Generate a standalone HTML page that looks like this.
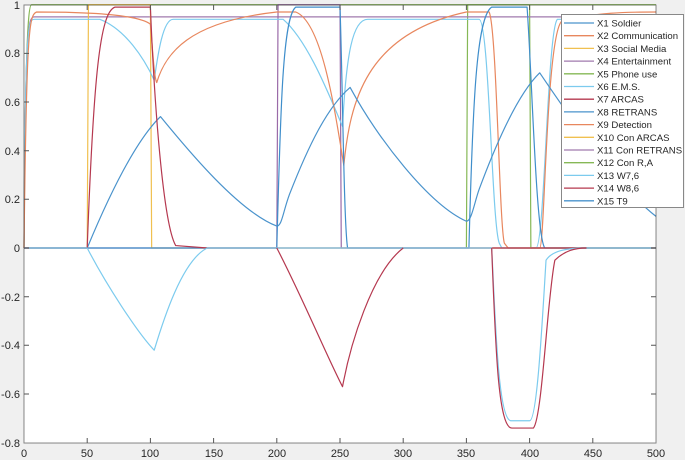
<!DOCTYPE html>
<html><head><meta charset="utf-8"><style>
html,body{margin:0;padding:0;background:#f0f0f0;}
body{width:685px;height:460px;overflow:hidden;font-family:"Liberation Sans",sans-serif;}
</style></head><body>
<svg width="685" height="460" xmlns="http://www.w3.org/2000/svg" style="position:absolute;left:0;top:0">
<rect x="24" y="5" width="632" height="438" fill="#fff"/>
<g transform="translate(24,248) scale(1.264,-243.3)" fill="none" stroke-width="1.2" stroke-linejoin="round">
<path vector-effect="non-scaling-stroke" stroke="#86b856" d="M0,0 C1,0.8 3,1 6,1 L500,1"/>
<path vector-effect="non-scaling-stroke" stroke="#86b856" d="M350,0 L351,1 L400,1 L401,0 L500,0"/>
<path vector-effect="non-scaling-stroke" stroke="#a07aae" d="M0,0 C1,0.9 3,0.95 8,0.95 L500,0.95"/>
<path vector-effect="non-scaling-stroke" stroke="#9a6aa8" d="M0,0 L200,0 L201,1 L250,1 L251,0 L500,0"/>
<path vector-effect="non-scaling-stroke" stroke="#f0c050" d="M0,0 L50,0 L51,1 L100,1 L101,0 L500,0"/>
<path vector-effect="non-scaling-stroke" stroke="#7ccbee" d="M0,0 C1,0.9 3,0.94 8,0.94 L60,0.94 C80,0.9 95,0.78 103,0.69 C106,0.8 110,0.94 118,0.94 L205,0.94 C225,0.85 242,0.62 252,0.5 C255,0.8 260,0.94 272,0.94 L360,0.94 C368,0.94 370,0.1 376,0.02 L378,0 L405,0 C412,0 414,0.9 422,0.94 L500,0.94"/>
<path vector-effect="non-scaling-stroke" stroke="#e8875e" d="M0,0 C2,0.9 4,0.96 10,0.97 C50,0.97 90,0.96 100,0.92 C102,0.8 103,0.7 105,0.68 C112,0.8 130,0.93 200,0.97 L215,0.97 C235,0.93 245,0.6 253,0.34 C258,0.6 270,0.88 350,0.97 L368,0.97 C374,0.9 376,0.1 380,0.02 L383,0 L408,0 C412,0 413,0.85 425,0.93 C450,0.97 480,0.97 500,0.97"/>
<path vector-effect="non-scaling-stroke" stroke="#4a93cc" d="M0,0 L50,0 C70,0.25 90,0.45 108,0.54 C130,0.4 170,0.15 200,0.09 C204,0.09 205,0.15 210,0.22 C225,0.42 240,0.58 258,0.66 C280,0.45 320,0.18 350,0.11 C354,0.11 356,0.18 360,0.24 C375,0.45 392,0.64 408,0.72 C430,0.55 470,0.25 500,0.13"/>
<path vector-effect="non-scaling-stroke" stroke="#3f8ecb" d="M0,0 L200,0 C203,0.6 205,0.95 215,0.99 L250,0.99 C252,0.7 253,0.1 256,0 L352,0 C355,0.6 358,0.95 370,0.99 L398,0.99 C402,0.7 405,0.05 412,0 L500,0"/>
<path vector-effect="non-scaling-stroke" stroke="#b5384f" d="M0,0 L50,0 C55,0.7 60,0.97 72,0.99 L100,0.99 C103,0.6 110,0.1 120,0.01 L145,0 L500,0"/>
<path vector-effect="non-scaling-stroke" stroke="#7ccbee" d="M0,0 L50,0 C65,-0.15 90,-0.35 103,-0.42 C110,-0.3 125,-0.05 145,0 L370,0 C373,-0.3 375,-0.7 385,-0.71 L400,-0.71 C406,-0.71 410,-0.3 413,-0.05 C418,-0.01 430,0 445,0 L500,0"/>
<path vector-effect="non-scaling-stroke" stroke="#b5384f" d="M200,0 C220,-0.2 240,-0.45 252,-0.57 C258,-0.4 275,-0.1 300,0 M370,0 C373,-0.4 375,-0.74 386,-0.74 L403,-0.74 C410,-0.7 414,-0.2 420,-0.05 C428,-0.01 436,0 445,0"/>
</g>
<rect x="24" y="5" width="632" height="438" fill="none" stroke="#262626" stroke-width="1" opacity="0.55"/>
<g stroke="#555" stroke-width="1">
<path d="M87.2,443v-5M150.4,443v-5M213.6,443v-5M276.8,443v-5M340,443v-5M403.2,443v-5M466.4,443v-5M529.6,443v-5M592.8,443v-5"/>
<path d="M87.2,5v5M150.4,5v5M213.6,5v5M276.8,5v5M340,5v5M403.2,5v5M466.4,5v5M529.6,5v5M592.8,5v5"/>
<path d="M24,53.4h5M24,102h5M24,150.7h5M24,199.3h5M24,248h5M24,296.7h5M24,345.3h5M24,394h5"/>
<path d="M656,53.4h-5M656,102h-5M656,150.7h-5M656,199.3h-5M656,248h-5M656,296.7h-5M656,345.3h-5M656,394h-5"/>
</g>
<g font-size="11" fill="#262626" text-anchor="end">
<text x="20" y="9">1</text><text x="20" y="57">0.8</text><text x="20" y="106">0.6</text><text x="20" y="155">0.4</text><text x="20" y="203">0.2</text><text x="20" y="252">0</text><text x="20" y="301">-0.2</text><text x="20" y="349">-0.4</text><text x="20" y="398">-0.6</text><text x="20" y="447">-0.8</text>
</g>
<g font-size="11" fill="#262626" text-anchor="middle">
<text x="24" y="457">0</text><text x="87" y="457">50</text><text x="150" y="457">100</text><text x="214" y="457">150</text><text x="277" y="457">200</text><text x="340" y="457">250</text><text x="403" y="457">300</text><text x="466" y="457">350</text><text x="530" y="457">400</text><text x="593" y="457">450</text><text x="656" y="457">500</text>
</g>
<rect x="561.5" y="14.5" width="122" height="193" fill="#fff" stroke="#888"/>
<g stroke-width="1.3">
<path d="M564,23h30" stroke="#4a93cc"/><path d="M564,35.7h30" stroke="#e8875e"/><path d="M564,48.4h30" stroke="#f0c050"/><path d="M564,61.1h30" stroke="#a07aae"/><path d="M564,73.8h30" stroke="#86b856"/><path d="M564,86.5h30" stroke="#7ccbee"/><path d="M564,99.2h30" stroke="#b5384f"/><path d="M564,111.9h30" stroke="#4a93cc"/><path d="M564,124.6h30" stroke="#e8875e"/><path d="M564,137.3h30" stroke="#f0c050"/><path d="M564,150h30" stroke="#a07aae"/><path d="M564,162.7h30" stroke="#86b856"/><path d="M564,175.4h30" stroke="#7ccbee"/><path d="M564,188.1h30" stroke="#b5384f"/><path d="M564,200.8h30" stroke="#4a93cc"/>
</g>
<g font-size="9.6" fill="#262626">
<text x="597" y="26.5">X1 Soldier</text><text x="597" y="39.2">X2 Communication</text><text x="597" y="51.9">X3 Social Media</text><text x="597" y="64.6">X4 Entertainment</text><text x="597" y="77.3">X5 Phone use</text><text x="597" y="90">X6 E.M.S.</text><text x="597" y="102.7">X7 ARCAS</text><text x="597" y="115.4">X8 RETRANS</text><text x="597" y="128.1">X9 Detection</text><text x="597" y="140.8">X10 Con ARCAS</text><text x="597" y="153.5">X11 Con RETRANS</text><text x="597" y="166.2">X12 Con R,A</text><text x="597" y="178.9">X13 W7,6</text><text x="597" y="191.6">X14 W8,6</text><text x="597" y="204.3">X15 T9</text>
</g>
</svg>
</body></html>
